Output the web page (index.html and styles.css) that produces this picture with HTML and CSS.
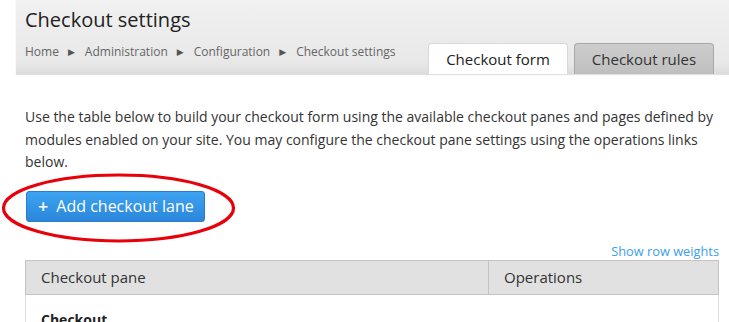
FILE: index.html
```html
<!DOCTYPE html>
<html>
<head>
<meta charset="utf-8">
<link rel="stylesheet" href="styles.css">
</head>
<body>
<div class="header">
  <h1 class="title">Checkout settings</h1>
  <div class="header-row">
    <nav class="breadcrumb">
      <a href="#">Home</a><span class="sep">▶</span><a href="#">Administration</a><span class="sep">▶</span><a href="#">Configuration</a><span class="sep">▶</span><a href="#">Checkout settings</a>
    </nav>
    <ul class="tabs">
      <li class="tab active">Checkout form</li>
      <li class="tab">Checkout rules</li>
    </ul>
  </div>
</div>
<div class="content">
  <p class="intro">Use the table below to build your checkout form using the available checkout panes and pages defined by modules enabled on your site. You may configure the checkout pane settings using the operations links below.</p>
  <div class="actions">
    <a class="button" href="#"><span class="plus">+</span>Add checkout lane</a>
    <svg class="highlight" width="235" height="72" viewBox="0 0 235 72"><ellipse cx="117.5" cy="36" rx="115" ry="33" fill="none" stroke="#e8000b" stroke-width="3.2"/></svg>
  </div>
  <div class="weights"><a href="#">Show row weights</a></div>
  <table class="panes">
    <thead>
      <tr><th class="col-pane">Checkout pane</th><th class="col-ops">Operations</th></tr>
    </thead>
    <tbody>
      <tr><td class="group" colspan="2">Checkout</td></tr>
    </tbody>
  </table>
</div>
</body>
</html>
```
FILE: styles.css
```css
html, body {
  margin: 0;
  padding: 0;
  background: #fff;
  font-family: "Open Sans", "DejaVu Sans", sans-serif;
  color: #333;
}
.header {
  margin-left: 16px;
  height: 74px;
  box-sizing: border-box;
  padding: 7px 15px 0 9px;
  background: linear-gradient(to bottom, #f1f1f1 0%, #e8e8e8 85%, #dcdcdc 100%);
  box-shadow: 0 1px 1px rgba(0,0,0,0.12);
}
.title {
  margin: 0;
  font-size: 20px;
  line-height: 26px;
  font-weight: normal;
  color: #222;
}
.header-row {
  display: flex;
  justify-content: space-between;
  align-items: flex-start;
}
.breadcrumb {
  margin-top: 10px;
  font-size: 12px;
  line-height: 18px;
  color: #666;
}
.breadcrumb a {
  color: #666;
  text-decoration: none;
}
.breadcrumb .sep {
  font-size: 9px;
  margin: 0 10px 0 9px;
  color: #555;
  vertical-align: 1px;
}
.tabs {
  list-style: none;
  margin: 10px 0 0;
  padding: 0;
  display: flex;
  gap: 6px;
}
.tab {
  width: 140px;
  height: 31px;
  box-sizing: border-box;
  text-align: center;
  font-size: 15px;
  color: #333;
  border-radius: 4px 4px 0 0;
  background: linear-gradient(to bottom, #cdcdcd, #bfbfbf);
  border: 1px solid #a8a8a8;
  border-bottom: none;
  line-height: 30px;
}
.tab.active {
  background: #fff;
  border-color: #d8d8d8;
  color: #222;
}
.content {
  padding: 0 10px 0 25px;
}
.intro {
  margin: 32px 0 0;
  font-size: 14px;
  line-height: 22.5px;
  color: #333;
}
.actions {
  position: relative;
  margin-top: 17px;
  height: 31px;
}
.button {
  display: inline-flex;
  align-items: center;
  margin-left: 1px;
  height: 31px;
  width: 179px;
  box-sizing: border-box;
  padding-left: 11px;
  border-radius: 3px;
  background: linear-gradient(to bottom, #3da3f1, #2b86db);
  border: 1px solid #2a7ccd;
  color: #fff;
  font-size: 16px;
  text-decoration: none;
}
.plus {
  font-size: 18px;
  font-weight: 600;
  margin-right: 8px;
  line-height: 1;
}
.highlight {
  position: absolute;
  left: -24px;
  top: -19px;
}
.weights {
  margin-top: 20px;
  text-align: right;
  font-size: 12.8px;
  line-height: 18px;
}
.weights a {
  color: #3aa0ec;
  text-decoration: none;
}
.panes {
  width: 100%;
  margin-top: 0;
  border-collapse: collapse;
  font-size: 15px;
}
.panes th {
  background: #e1e1e1;
  border: 1px solid #c4c4c4;
  height: 33px;
  padding: 0 15px;
  text-align: left;
  font-weight: normal;
  color: #333;
}
.col-pane { width: 432px; }
.panes td {
  border: 1px solid #e0e0e0;
  padding: 15px 15px;
}
.group {
  font-weight: bold;
  font-size: 14px;
  color: #222;
}
```
